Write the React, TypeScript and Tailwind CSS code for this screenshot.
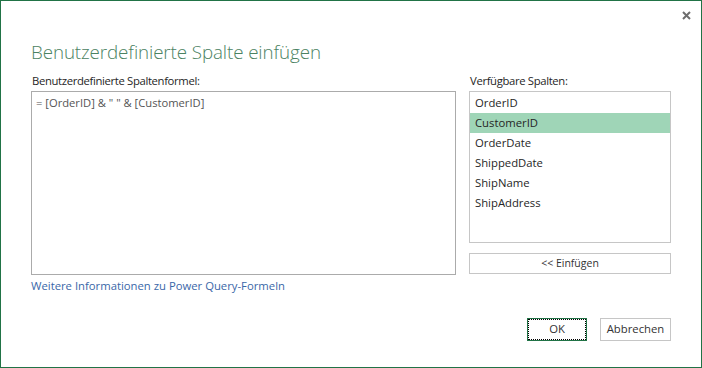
import React from "react";

const items = ["OrderID", "CustomerID", "OrderDate", "ShippedDate", "ShipName", "ShipAddress"];

export default function App() {
  return (
    <div
      className="relative w-[702px] h-[368px] bg-white border border-[#217346] flex flex-col pl-[30px] text-[#262626]"
      style={{ fontFamily: '"Open Sans", "Noto Sans", sans-serif' }}
    >
      <button className="absolute right-[9px] top-[8px] w-[12px] h-[12px] flex items-center justify-center">
        <svg width="9" height="9" viewBox="0 0 9 9">
          <path d="M1 1 L8 8 M8 1 L1 8" stroke="#6d6d6d" strokeWidth="2" />
        </svg>
      </button>
      <div className="mt-[38px] h-[27px] text-[18.8px] leading-[27px] font-light text-[#4b8262] tracking-[-0.1px]">
        Benutzerdefinierte Spalte einfügen
      </div>
      <div className="mt-[6px] flex gap-[13px]">
        <div className="w-[425px] flex flex-col">
          <div className="h-[19px] pl-[1px] text-[11.3px] leading-[17px] tracking-[-0.35px]">Benutzerdefinierte Spaltenformel:</div>
          <div className="h-[184px] border border-[#ababab] px-[4px] pt-[3px] text-[11.2px] leading-[16px] text-[#555]">
            = [OrderID] &amp; " " &amp; [CustomerID]
          </div>
          <div className="mt-[3px] text-[11.3px] leading-[16px] text-[#3a67a8]">
            Weitere Informationen zu Power Query-Formeln
          </div>
        </div>
        <div className="w-[202px] flex flex-col">
          <div className="h-[19px] pl-[1px] text-[11.3px] leading-[17px] tracking-[-0.35px]">Verfügbare Spalten:</div>
          <div className="h-[152px] border border-[#c6c6c6] pt-[1px]">
            {items.map((it) => (
              <div
                key={it}
                className={
                  "h-[20px] px-[5px] text-[11.3px] leading-[20px] " +
                  (it === "CustomerID" ? "bg-[#9fd5b7]" : "")
                }
              >
                {it}
              </div>
            ))}
          </div>
          <div className="mt-[10px] h-[21px] border border-[#c6c6c6] flex items-center justify-center text-[10.5px] text-[#333]">
            &lt;&lt; Einfügen
          </div>
        </div>
      </div>
      <div className="mt-[24px] flex justify-end gap-[13px] pr-[30px]">
        <div className="w-[60px] h-[23px] border border-[#217346] p-0">
          <div className="w-full h-full border border-dotted border-black flex items-center justify-center text-[11.3px] text-[#333]">
            OK
          </div>
        </div>
        <div className="w-[71px] h-[23px] border border-[#c6c6c6] flex items-center justify-center text-[11.3px] text-[#333]">
          Abbrechen
        </div>
      </div>
    </div>
  );
}
